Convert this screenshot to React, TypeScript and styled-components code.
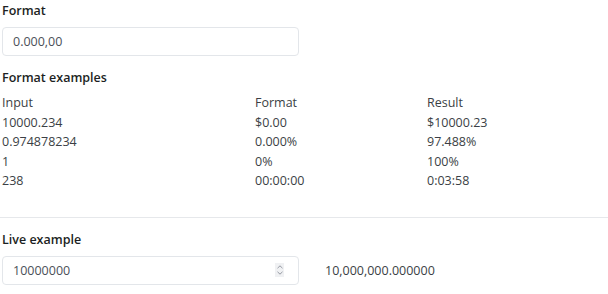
import styled, { createGlobalStyle } from "styled-components"

const GlobalStyle = createGlobalStyle`
  html, body {
    margin: 0;
    padding: 0;
    background: #ffffff;
  }
  body {
    font-family: "Open Sans", "Liberation Sans", sans-serif;
    color: #374151;
  }
`

const examples = [
  { input: "10000.234", format: "$0.00", result: "$10000.23" },
  { input: "0.974878234", format: "0.000%", result: "97.488%" },
  { input: "1", format: "0%", result: "100%" },
  { input: "238", format: "00:00:00", result: "0:03:58" },
]

export default function App() {
  return (
    <Page>
      <GlobalStyle />
      <Section>
        <Label>Format</Label>
        <TextInput defaultValue="0.000,00" />
      </Section>

      <Section $gap={12}>
        <Label>Format examples</Label>
        <Table>
          <Cell>Input</Cell>
          <Cell>Format</Cell>
          <Cell>Result</Cell>
          {examples.map((row) => (
            <Row key={row.input}>
              <Cell>{row.input}</Cell>
              <Cell>{row.format}</Cell>
              <Cell>{row.result}</Cell>
            </Row>
          ))}
        </Table>
      </Section>

      <Divider />

      <Section>
        <Label>Live example</Label>
        <LiveRow>
          <NumberBox>
            <NumberInput defaultValue="10000000" />
            <Spinner>
              <svg width="8" height="12" viewBox="0 0 8 12" fill="none" stroke="#8a8f98" strokeWidth="0.9">
                <path d="M1.5 4.2 L4 1.8 L6.5 4.2" />
                <path d="M1.5 7.8 L4 10.2 L6.5 7.8" />
              </svg>
            </Spinner>
          </NumberBox>
          <LiveResult>10,000,000.000000</LiveResult>
        </LiveRow>
      </Section>
    </Page>
  )
}

const Page = styled.div`
  width: 608px;
  padding: 1px 0 0 2px;
  box-sizing: border-box;
`

const Section = styled.div<{ $gap?: number }>`
  display: flex;
  flex-direction: column;
  margin-top: ${(p) => p.$gap ?? 0}px;
`

const Label = styled.div`
  font-size: 12.5px;
  font-weight: 600;
  line-height: 20px;
  color: #1c1f23;
  margin-bottom: 6px;
`

const TextInput = styled.input`
  width: 297px;
  height: 29px;
  box-sizing: border-box;
  border: 1px solid #e3e6ea;
  border-radius: 4px;
  padding: 0 10px;
  font-family: inherit;
  font-size: 12.5px;
  color: #4b5058;
  outline: none;
`

const Table = styled.div`
  display: grid;
  grid-template-columns: 253px 172px 1fr;
  grid-auto-rows: 19.5px;
  margin-top: -1px;
`

const Row = styled.div`
  display: contents;
`

const Cell = styled.div`
  font-size: 12.5px;
  line-height: 19.5px;
  color: #3b3f45;
  white-space: nowrap;
`

const Divider = styled.hr`
  border: none;
  border-top: 1px solid #e6e8eb;
  margin: 26px 0 12px -2px;
  width: 608px;
`

const LiveRow = styled.div`
  display: flex;
  align-items: center;
  gap: 26px;
`

const NumberBox = styled.div`
  width: 297px;
  height: 29px;
  box-sizing: border-box;
  border: 1px solid #e3e6ea;
  border-radius: 4px;
  padding: 0 14px 0 10px;
  display: flex;
  align-items: center;
`

const NumberInput = styled.input`
  flex: 1;
  border: none;
  outline: none;
  padding: 0;
  font-family: inherit;
  font-size: 12.5px;
  color: #4b5058;
  background: transparent;
`

const Spinner = styled.div`
  width: 9px;
  height: 14px;
  background: #f0f1f3;
  display: flex;
  align-items: center;
  justify-content: center;
`

const LiveResult = styled.div`
  font-size: 12.5px;
  color: #3b3f45;
`
